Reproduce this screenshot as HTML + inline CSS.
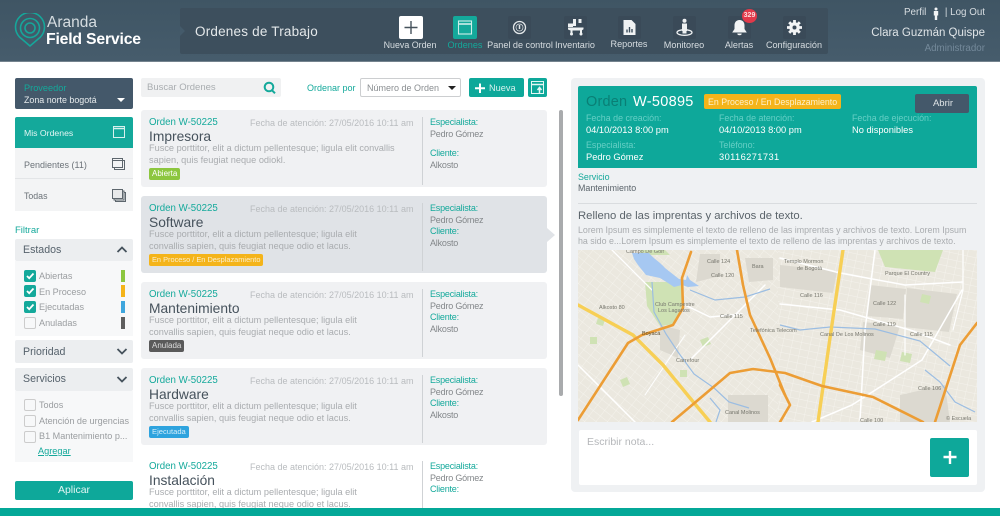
<!DOCTYPE html>
<html lang="es"><head><meta charset="utf-8"><title>Aranda Field Service</title>
<style>
html,body{margin:0;padding:0;width:1000px;height:516px;overflow:hidden;background:#fff}
body{position:relative;font-family:"Liberation Sans",sans-serif;font-size:10px;color:#777}
.a,.t{position:absolute}
.t{white-space:nowrap;line-height:12px}
.c{transform:translateX(-50%)}
.te{color:#14a99b}
.card{position:absolute;left:141px;width:406px;height:77px;background:#f0f1f3;border-radius:3px}
.card .d{position:absolute;left:281px;top:7px;height:68px;width:1px;background:#cfd2d5}
.o{position:absolute;left:8px;top:7px;font-size:9.7px;line-height:12px;color:#14a99b;white-space:nowrap}
.f{position:absolute;left:109px;top:7px;font-size:9px;line-height:12px;color:#b9bcbf;white-space:nowrap}
.h{position:absolute;left:8px;top:18px;font-size:13.8px;line-height:18px;color:#46525c;white-space:nowrap}
.p{position:absolute;left:8px;top:33px;font-size:9.2px;line-height:11.5px;color:#a9acaf;white-space:nowrap}
.s{position:absolute;left:289px;font-size:9px;line-height:12px;white-space:nowrap;letter-spacing:-.2px}
.b{position:absolute;left:8px;height:12px;line-height:12px;font-size:8px;border-radius:2px;color:#fff;padding:0 3px;white-space:nowrap}
.tile{position:absolute;top:16px;width:23px;height:23px;background:#3a4a58;border-radius:2px}
.nl{position:absolute;top:39px;font-size:9.1px;line-height:12px;color:#d7dde1;white-space:nowrap;transform:translateX(-50%)}
.cb{position:absolute;left:24px;width:10px;height:10px;border-radius:2px}
.on{background:#14a99b;border:1px solid #14a99b}
.off{background:#f7f8f9;border:1px solid #ccc}
.fl{position:absolute;left:39px;font-size:9.1px;line-height:12px;color:#9a9da0;white-space:nowrap}
.fh{position:absolute;left:15px;width:118px;background:#eceef0;border-radius:2px}
.fh span{position:absolute;left:8px;top:5px;font-size:10.6px;line-height:13px;color:#56626c}
.lab{position:absolute;font-size:8.9px;line-height:12px;white-space:nowrap}
.v{font-size:9.3px}
svg{position:absolute;overflow:hidden}
</style></head><body>

<!-- header -->
<div class="a" style="left:0;top:0;width:1000px;height:62px;background:linear-gradient(#3f5564,#465c6c);border-bottom:1px solid #74838e;box-sizing:border-box"></div>
<svg style="left:13px;top:13px" width="34" height="36" viewBox="0 0 34 36" fill="none" stroke="#16a69a"><path d="M17 33 L6.5 24 A14.5 14.5 0 1 1 27.5 24 Z" stroke-width="1.6"/><circle cx="17" cy="15" r="9.5" stroke-width="1.6"/><circle cx="17" cy="15" r="5" stroke-width="1.6"/></svg>
<div class="t" style="left:47px;top:14px;font-size:15.5px;line-height:17px;color:#d6dde1">Aranda</div>
<div class="t" style="left:46px;top:30px;font-size:15.800px;line-height:20px;font-weight:700;color:#fff;letter-spacing:-.2px">Field Service</div>
<div class="a" style="left:180px;top:8px;width:648px;height:46px;background:#3d4f5d;border-radius:2px"></div>
<div class="a" style="left:180px;top:26px;width:0;height:0;border-left:5px solid #445a6a;border-top:5px solid transparent;border-bottom:5px solid transparent"></div>
<div class="t" style="left:195px;top:23px;font-size:13.500px;line-height:17px;color:#e4e8ea;letter-spacing:.2px">Ordenes de Trabajo</div>

<div class="a" style="left:399px;top:16px;width:24px;height:23px;background:#fff;border-radius:2px"></div>
<svg style="left:399px;top:16px" width="24" height="23"><path d="M12 5v13M5.5 11.500h13" stroke="#46525c" stroke-width="1.400"/></svg>
<div class="nl" style="left:410px;font-size:8.900px">Nueva Orden</div>

<div class="a" style="left:453px;top:16px;width:24px;height:23px;background:#14a99b;border-radius:2px"></div>
<svg style="left:453px;top:16px" width="24" height="23" fill="none" stroke="#cdeeea"><rect x="5.500" y="5" width="13" height="13" stroke-width="1.100"/><path d="M5.500 8h13" stroke-width="1.600"/></svg>
<div class="nl" style="left:465px;color:#14a99b">Ordenes</div>

<div class="tile" style="left:508px"></div>
<svg style="left:508px;top:16px" width="23" height="23" fill="none" stroke="#e4e8ea"><circle cx="11.500" cy="11.500" r="6" stroke-width="1.300"/><circle cx="11.500" cy="11.500" r="3.500" stroke-width=".7"/><path d="M11.500 9v4" stroke-width="1.500"/></svg>
<div class="nl" style="left:520px">Panel de control</div>

<div class="tile" style="left:564px"></div>
<svg style="left:564px;top:16px" width="23" height="23" fill="#eef1f2"><rect x="9" y="3" width="3" height="7"/><rect x="14.500" y="3" width="3" height="4"/><rect x="4" y="7.500" width="5" height="3.500"/><path d="M4 11.500h15.500v1.800l-1.500 1v2.700h-2v-2.500H8.500v2.500h-2v-2.500L4 13.500z"/><circle cx="7.500" cy="18" r="1.500"/><circle cx="17" cy="18" r="1.500"/></svg>
<div class="nl" style="left:575px">Inventario</div>

<div class="tile" style="left:618px"></div>
<svg style="left:618px;top:16px" width="23" height="23"><path d="M5.500 4h8l4 4v11h-12z" fill="#f0f2f3"/><path d="M9 16.500v-3M11.500 16.500v-5.500M14 16.500v-3.500" stroke="#3b4c5a" stroke-width="1.400"/></svg>
<div class="nl" style="left:629px;top:38px">Reportes</div>

<div class="tile" style="left:673px"></div>
<svg style="left:673px;top:16px" width="23" height="23"><circle cx="11.500" cy="4.800" r="2" fill="#eef1f2"/><path d="M9 7.500h5v7.500H9z" fill="#eef1f2"/><ellipse cx="11.500" cy="16.500" rx="7.500" ry="2.800" fill="none" stroke="#eef1f2" stroke-width="1.300"/><path d="M9.500 14h4v3.500h-4z" fill="#eef1f2"/></svg>
<div class="nl" style="left:684px">Monitoreo</div>

<div class="tile" style="left:728px"></div>
<svg style="left:728px;top:16px" width="23" height="23"><path d="M11.500 4c3.400 0 5 2.500 5 5.500v3.500l2.300 3.500H4.200L6.500 13V9.500C6.500 6.500 8.100 4 11.500 4z" fill="#f2f4f5"/><path d="M9.300 17.500h4.400a2.200 1.800 0 0 1-4.400 0z" fill="#f2f4f5"/></svg>
<div class="a" style="left:742px;top:9px;width:15px;height:14px;border-radius:50%;background:#e2394a"></div>
<div class="t c" style="left:749.500px;top:10px;font-size:7px;font-weight:700;color:#fbdcdc">329</div>
<div class="nl" style="left:739px">Alertas</div>

<div class="tile" style="left:783px"></div>
<svg style="left:783px;top:16px" width="23" height="23"><path d="M11.500 4v15M4 11.500h15M6.200 6.200l10.600 10.600M16.800 6.200L6.200 16.800" stroke="#f2f4f5" stroke-width="2.800"/><circle cx="11.500" cy="11.500" r="5.300" fill="#f2f4f5"/><circle cx="11.500" cy="11.500" r="2" fill="#3a4a58"/></svg>
<div class="nl" style="left:794px">Configuración</div>

<div class="t" style="right:15px;top:7px;font-size:9.800px;color:#d7dde1">| Log Out</div>
<div class="t" style="left:904px;top:7px;font-size:9.800px;color:#d7dde1">Perfil</div>
<svg style="left:932px;top:7px" width="8" height="13" fill="#f2f4f5"><circle cx="4" cy="2" r="1.500"/><path d="M1.800 4h4.400v4.500H5.200V13H2.800V8.500H1.800z"/></svg>
<div class="t" style="right:15px;top:26px;font-size:11.500px;line-height:15px;color:#dfe4e7">Clara Guzmán Quispe</div>
<div class="t" style="right:15px;top:43px;font-size:9.800px;color:#74899a">Administrador</div>

<!-- sidebar -->
<div class="a" style="left:15px;top:78px;width:118px;height:31px;background:#44586a;border-radius:2px"></div>
<div class="t te" style="left:24px;top:82px;font-size:9.200px;color:#14a99b">Proveedor</div>
<div class="t" style="left:24px;top:94px;font-size:8.900px;color:#e6eaec">Zona norte bogotá</div>
<div class="a" style="left:117px;top:98px;border-top:4px solid #fff;border-left:4px solid transparent;border-right:4px solid transparent"></div>

<div class="a" style="left:15px;top:117px;width:118px;height:31px;background:#14a99b;border-radius:2px 2px 0 0"></div>
<div class="t" style="left:24px;top:127px;font-size:8.700px;color:#e2f5f3">Mis Ordenes</div>
<svg style="left:112px;top:125px" width="14" height="14" fill="none" stroke="#d8f1ee"><rect x="1.500" y="1.500" width="11" height="11"/><path d="M1.500 3.500h11" stroke-width="1.500"/></svg>
<div class="a" style="left:15px;top:148px;width:118px;height:31px;background:#f3f4f5;border-bottom:1px solid #e3e5e7;box-sizing:border-box"></div>
<div class="t" style="left:24px;top:159px;font-size:9px;color:#6c7379">Pendientes (11)</div>
<svg style="left:112px;top:157px" width="14" height="14" fill="#f3f4f5" stroke="#5d666d"><rect x="2.500" y="3.500" width="10" height="9"/><rect x="0.500" y="1.500" width="10" height="9"/><path d="M0.500 3.500h10"/></svg>
<div class="a" style="left:15px;top:179px;width:118px;height:32px;background:#f3f4f5"></div>
<div class="t" style="left:24px;top:190px;font-size:8.800px;color:#6c7379">Todas</div>
<svg style="left:112px;top:188px" width="14" height="14" fill="#e8e9ea" stroke="#5d666d"><rect x="3.500" y="4.500" width="10" height="9"/><rect x="2" y="3" width="10" height="9"/><rect x="0.500" y="1.500" width="10" height="9"/></svg>

<div class="t te" style="left:15px;top:225px;font-size:9.500px">Filtrar</div>
<div class="a" style="left:15px;top:261px;width:118px;height:75px;background:#f7f8f9"></div>
<div class="fh" style="top:239px;height:22px"><span style="top:5px">Estados</span></div>
<svg style="left:116px;top:245px" width="12" height="9" fill="none" stroke="#46525c" stroke-width="1.800"><path d="M1.500 7L6 2.500 10.500 7"/></svg>

<div class="cb on" style="top:270px"></div><div class="cb on" style="top:285px"></div><div class="cb on" style="top:301px"></div><div class="cb off" style="top:317px"></div>
<svg style="left:24px;top:270px" width="12" height="60" fill="none" stroke="#fff" stroke-width="1.800"><path d="M3 6l2.200 2.200L9.500 3.500M3 21l2.200 2.200 4.300-4.700M3 37l2.200 2.200 4.300-4.700"/></svg>
<div class="fl" style="top:270px">Abiertas</div><div class="fl" style="top:286px">En Proceso</div><div class="fl" style="top:301px">Ejecutadas</div><div class="fl" style="top:317px">Anuladas</div>
<div class="a" style="left:121px;top:270px;width:4px;height:12px;background:#8cc63f"></div>
<div class="a" style="left:121px;top:285px;width:4px;height:12px;background:#f4b41a"></div>
<div class="a" style="left:121px;top:301px;width:4px;height:12px;background:#3ea6dd"></div>
<div class="a" style="left:121px;top:317px;width:4px;height:12px;background:#5e5e5e"></div>

<div class="fh" style="top:340px;height:23px"><span style="top:6px">Prioridad</span></div>
<svg style="left:116px;top:347px" width="12" height="9" fill="none" stroke="#46525c" stroke-width="1.800"><path d="M1.500 2L6 6.500 10.500 2"/></svg>
<div class="fh" style="top:368px;height:23px"><span style="top:5px">Servicios</span></div>
<svg style="left:116px;top:375px" width="12" height="9" fill="none" stroke="#46525c" stroke-width="1.800"><path d="M1.500 2L6 6.500 10.500 2"/></svg>
<div class="a" style="left:15px;top:391px;width:118px;height:71px;background:#f7f8f9"></div>
<div class="cb off" style="top:399px"></div><div class="cb off" style="top:415px"></div><div class="cb off" style="top:431px"></div>
<div class="fl" style="top:399px">Todos</div><div class="fl" style="top:415px">Atención de urgencias</div><div class="fl" style="top:430px">B1 Mantenimiento p...</div>
<div class="t te" style="left:38px;top:445px;font-size:9.200px;text-decoration:underline">Agregar</div>
<div class="a" style="left:15px;top:481px;width:118px;height:19px;background:#0ea89a;border-radius:2px"></div>
<div class="t c" style="left:74px;top:484px;font-size:10.500px;color:#e2f5f3">Aplicar</div>

<!-- toolbar -->
<div class="a" style="left:141px;top:78px;width:140px;height:19px;background:#f0f1f2;border-radius:2px"></div>
<div class="t" style="left:147px;top:82px;font-size:9.500px;color:#a9adb0">Buscar Ordenes</div>
<svg style="left:262px;top:80px" width="15" height="15" fill="none" stroke="#14a99b" stroke-width="2"><circle cx="7" cy="7" r="4.300"/><path d="M10 10.300l3 3"/></svg>
<div class="t te" style="left:307px;top:82px;font-size:9px">Ordenar por</div>
<div class="a" style="left:360px;top:78px;width:101px;height:19px;background:#fff;border:1px solid #ccced0;border-radius:2px;box-sizing:border-box"></div>
<div class="t" style="left:367px;top:82px;font-size:9px;color:#8a8e91">Número de Orden</div>
<div class="a" style="left:448px;top:86px;border-top:4px solid #222;border-left:4px solid transparent;border-right:4px solid transparent"></div>
<div class="a" style="left:469px;top:78px;width:55px;height:19px;background:#0ea89a;border-radius:2px"></div>
<svg style="left:473px;top:81px" width="14" height="14" stroke="#fff" stroke-width="2"><path d="M7 2.500v9.500M2 7.200h10"/></svg>
<div class="t" style="left:489px;top:82px;font-size:9.200px;color:#d8f1ee">Nueva</div>
<div class="a" style="left:528px;top:78px;width:19px;height:19px;background:#0ea89a;border-radius:2px"></div>
<svg style="left:528px;top:78px" width="19" height="19" fill="none" stroke="#e5f6f4"><rect x="3.500" y="3.500" width="12" height="12"/><path d="M3.500 6.500h12" stroke-width="1.500"/><path d="M11.500 15v-5M9.500 12l2-2.500 2 2.500" stroke-width="1.500"/></svg>

<!-- cards -->
<div class="card" style="top:110px"><div class="d"></div>
<div class="o">Orden W-50225</div><div class="f">Fecha de atención: 27/05/2016 10:11 am</div><div class="h">Impresora</div>
<div class="p">Fusce porttitor, elit a dictum pellentesque; ligula elit convallis<br>sapien, quis feugiat neque odiokl.</div>
<div class="b" style="top:58px;background:#8cc63f">Abierta</div>
<div class="s te" style="top:6px">Especialista:</div><div class="s" style="top:18px;color:#83878a">Pedro Gómez</div><div class="s te" style="top:37px">Cliente:</div><div class="s" style="top:49px;color:#83878a">Alkosto</div></div>

<div class="card" style="top:196px;background:#e0e3e7"><div class="d"></div>
<div class="o">Orden W-50225</div><div class="f">Fecha de atención: 27/05/2016 10:11 am</div><div class="h">Software</div>
<div class="p">Fusce porttitor, elit a dictum pellentesque; ligula elit<br>convallis sapien, quis feugiat neque odio et lacus.</div>
<div class="b" style="top:58px;background:#f4b41a;color:#fbeecb;font-size:7.400px">En Proceso / En Desplazamiento</div>
<div class="s te" style="top:6px">Especialista:</div><div class="s" style="top:18px;color:#83878a">Pedro Gómez</div><div class="s te" style="top:29px">Cliente:</div><div class="s" style="top:41px;color:#83878a">Alkosto</div></div>
<div class="a" style="left:547px;top:228px;border-left:8px solid #e0e3e7;border-top:7px solid transparent;border-bottom:7px solid transparent"></div>

<div class="card" style="top:282px"><div class="d"></div>
<div class="o">Orden W-50225</div><div class="f">Fecha de atención: 27/05/2016 10:11 am</div><div class="h">Mantenimiento</div>
<div class="p">Fusce porttitor, elit a dictum pellentesque; ligula elit<br>convallis sapien, quis feugiat neque odio et lacus.</div>
<div class="b" style="top:58px;background:#5a5a5a;color:#ddd">Anulada</div>
<div class="s te" style="top:6px">Especialista:</div><div class="s" style="top:18px;color:#83878a">Pedro Gómez</div><div class="s te" style="top:29px">Cliente:</div><div class="s" style="top:41px;color:#83878a">Alkosto</div></div>

<div class="card" style="top:368px"><div class="d"></div>
<div class="o">Orden W-50225</div><div class="f">Fecha de atención: 27/05/2016 10:11 am</div><div class="h">Hardware</div>
<div class="p">Fusce porttitor, elit a dictum pellentesque; ligula elit<br>convallis sapien, quis feugiat neque odio et lacus.</div>
<div class="b" style="top:58px;background:#2ea3de;color:#d5eefa;font-size:7.600px">Ejecutada</div>
<div class="s te" style="top:6px">Especialista:</div><div class="s" style="top:18px;color:#83878a">Pedro Gómez</div><div class="s te" style="top:29px">Cliente:</div><div class="s" style="top:41px;color:#83878a">Alkosto</div></div>

<div class="card" style="top:454px;background:#fff;height:54px;overflow:hidden"><div class="d"></div>
<div class="o">Orden W-50225</div><div class="f">Fecha de atención: 27/05/2016 10:11 am</div><div class="h">Instalación</div>
<div class="p">Fusce porttitor, elit a dictum pellentesque; ligula elit<br>convallis sapien, quis feugiat neque odio et lacus.</div>
<div class="s te" style="top:6px">Especialista:</div><div class="s" style="top:18px;color:#83878a">Pedro Gómez</div><div class="s te" style="top:29px">Cliente:</div></div>

<div class="a" style="left:559px;top:110px;width:4px;height:286px;background:#a9abad;border-radius:2px"></div>

<!-- detail -->
<div class="a" style="left:571px;top:78px;width:414px;height:414px;background:#eff1f3;border-radius:4px"></div>
<div class="a" style="left:578px;top:86px;width:399px;height:82px;background:#0ea89a;border-radius:2px 2px 0 0"></div>
<div class="t" style="left:586px;top:93px;font-size:14.500px;line-height:18px;color:#0a7f75;letter-spacing:.2px">Orden</div>
<div class="t" style="left:633px;top:93px;font-size:14.500px;line-height:18px;color:#fff;letter-spacing:.3px">W-50895</div>
<div class="a" style="left:704px;top:94px;width:137px;height:15px;background:#f4b41a;border-radius:2px"></div>
<div class="t" style="left:708px;top:96px;font-size:8.800px;color:#fdf0cd">En Proceso / En Desplazamiento</div>
<div class="a" style="left:915px;top:94px;width:54px;height:19px;background:#44586a;border-radius:2px"></div>
<div class="t c" style="left:943px;top:98px;font-size:9.500px;color:#dfe4e7">Abrir</div>
<div class="lab" style="left:586px;top:112px;color:#66cfc5">Fecha de creación:</div><div class="lab v" style="left:586px;top:124px;color:#fff">04/10/2013 8:00 pm</div>
<div class="lab" style="left:719px;top:112px;color:#66cfc5">Fecha de atención:</div><div class="lab v" style="left:719px;top:124px;color:#fff">04/10/2013 8:00 pm</div>
<div class="lab" style="left:852px;top:112px;color:#66cfc5">Fecha de ejecución:</div><div class="lab v" style="left:852px;top:124px;color:#fff">No disponibles</div>
<div class="lab" style="left:586px;top:139px;color:#66cfc5">Especialista:</div><div class="lab v" style="left:586px;top:151px;color:#fff">Pedro Gómez</div>
<div class="lab" style="left:719px;top:139px;color:#66cfc5">Teléfono:</div><div class="lab v" style="left:719px;top:151px;color:#fff;letter-spacing:.4px">30116271731</div>
<div class="lab te" style="left:578px;top:171px">Servicio</div><div class="lab" style="left:578px;top:182px;color:#5b646b">Mantenimiento</div>
<div class="a" style="left:578px;top:203px;width:399px;height:1px;background:#d9dcdf"></div>
<div class="t" style="left:578px;top:209px;font-size:11.300px;line-height:14px;color:#5b646b">Relleno de las imprentas y archivos de texto.</div>
<div class="t" style="left:578px;top:224px;font-size:8.850px;color:#a9acaf">Lorem Ipsum es simplemente el texto de relleno de las imprentas y archivos de texto. Lorem Ipsum</div>
<div class="t" style="left:578px;top:235px;font-size:8.850px;color:#a9acaf">ha sido e...Lorem Ipsum es simplemente el texto de relleno de las imprentas y archivos de texto.</div>

<!-- map -->
<svg style="left:578px;top:250px" width="399" height="172" viewBox="578 250 399 172" font-family="Liberation Sans, sans-serif" font-size="5.500" fill="#77776e">
<defs>
<pattern id="g1" width="9" height="7" patternUnits="userSpaceOnUse" patternTransform="rotate(38)"><path d="M0 0H9M0 0V7" stroke="#f8f6f1" stroke-width=".7" fill="none"/></pattern>
<pattern id="g2" width="9" height="7" patternUnits="userSpaceOnUse" patternTransform="rotate(12)"><path d="M0 0H9M0 0V7" stroke="#f8f6f1" stroke-width=".7" fill="none"/></pattern>
</defs>
<rect x="578" y="250" width="399" height="172" fill="#ebe8df"/>
<rect x="578" y="250" width="200" height="172" fill="url(#g1)"/>
<rect x="778" y="250" width="199" height="172" fill="url(#g2)"/>
<g fill="#dcd9d0"><path d="M780 265l57 6-4 22-53-6z"/><path d="M870 285l36 4-3 30-36-3z"/><path d="M907 288l50 6-8 38-45-5z"/><path d="M863 322l37 4-10 32-30-8z"/><path d="M900 395l45-10 5 37-50 0z"/><path d="M700 254l20 0 0 22-24 6z"/><path d="M728 395l40 0 0 27-40 0z"/><path d="M745 258l28 0 0 22-24 2z"/><path d="M660 325l20 5-2 28-18-8z"/></g>
<g fill="#cfe2b4"><path d="M645 282l37 0 0 30-7 12-15 2-13-20z"/><path d="M878 250l65 0-8 22-50-5z"/><path d="M640 250l25 0 5 5-30 0z"/><path d="M590 337l7 0 0 7-7 0z"/><path d="M620 380l7-3 3 7-7 3z"/><path d="M700 340l8-3 3 7-8 3z"/><path d="M680 370l7 0 0 7-7 0z"/><path d="M876 350l11 2-2 9-11-2z"/><path d="M902 352l10 2-2 9-10-2z"/><path d="M922 294l9 2-2 8-9-2z"/><path d="M598 318l7 2-2 6-7-2z"/></g>
<g fill="none" stroke="#fff" stroke-linecap="round"><path d="M612 250l40 40" stroke-width="1.300"/><path d="M685 305l25 12 32-3" stroke-width="1.500"/><path d="M690 360l50-50 25-25" stroke-width="1.500"/><path d="M578 365l60 60" stroke-width="1.500"/><path d="M645 395l40-60" stroke-width="1"/><path d="M780 258l60 15 65 12 58-3" stroke-width="1.500"/><path d="M780 304l60 6 70 20 40 15" stroke-width="1.500"/><path d="M875 250l-10 80-5 90" stroke-width="1.500"/><path d="M905 295l0 60" stroke-width="1.200"/><path d="M962 290l-40 70-70 45-40 17" stroke-width="1.500"/><path d="M963 250l0 40-10 40" stroke-width="1.200"/></g>
<path d="M632 253h17c5 6 12 10 16 15l14 11 7 1 1-5 3 5 9 6-11 1-6-2-8 2-6-4-8-5-14-3-8-10-4-6z" fill="#a6c8f2"/>
<g fill="none" stroke="#9bbde2" stroke-width="1.200"><path d="M652 282l2 30 12 22 12 18 16 22 20 14 15 14 20 6"/><path d="M690 290l25 10 30-3 25-8"/><path d="M780 325l20 5 30-3 45 2 45 12 30 25"/><path d="M925 370l15 12 15 20 20 10"/><path d="M710 398l10 12-4 12"/></g>
<g fill="none" stroke-linejoin="round" stroke-linecap="round"><path d="M578 305l55 30 30 30 27 33 20 24" stroke="#f7cf55" stroke-width="3.400"/><path d="M843 250l-13 88-12 84" stroke="#f7cf55" stroke-width="3.400"/><path d="M578 420l50-77 14-8 31-10 10-17-1-30 9-26" stroke="#ec9d35" stroke-width="2.600"/><path d="M737 250l6 35 7 30 20 43 15 37" stroke="#ec9d35" stroke-width="2.600"/><path d="M672 422l58-49 23-4 32 4 37 13 51 11 50 25" stroke="#ec9d35" stroke-width="2.600"/><path d="M780 385l10 20-10 17" stroke="#ec9d35" stroke-width="2.600"/><path d="M977 323l-17 22-25 77" stroke="#ec9d35" stroke-width="2.600"/></g>
<text x="626" y="253">Campo De Golf</text><text x="707" y="263">Calle 124</text><text x="711" y="277">Calle 120</text><text x="752" y="268">Bara</text><text x="599" y="309">Alkosto 80</text><text x="655" y="306">Club Campestre</text><text x="658" y="312">Los Lagartos</text><text x="720" y="318">Calle 115</text><text x="750" y="332">Telefónica Telecom</text><text x="676" y="362">Carrefour</text><text x="642" y="335" fill="#5a4a2c">Boyacá</text><text x="725" y="414">Canal Molinos</text><text x="784" y="263">Templo Mormon</text><text x="797" y="270">de Bogotá</text><text x="885" y="275">Parque El Country</text><text x="800" y="297">Calle 116</text><text x="820" y="336">Canal De Los Molinos</text><text x="873" y="305">Calle 122</text><text x="873" y="326">Calle 119</text><text x="910" y="336">Calle 115</text><text x="860" y="422">Calle 100</text><text x="918" y="390">Calle 106</text><text x="946" y="420">© Escuela</text>
</svg>

<!-- note -->
<div class="a" style="left:579px;top:430px;width:398px;height:55px;background:#fff;border-radius:2px"></div>
<div class="t" style="left:587px;top:436px;font-size:10.500px;color:#b5b7ba">Escribir nota...</div>
<div class="a" style="left:930px;top:438px;width:39px;height:39px;background:#0ea89a;border-radius:2px"></div>
<svg style="left:930px;top:438px" width="39" height="39" stroke="#fff" stroke-width="2.400"><path d="M20 13v13M13.500 19h13"/></svg>

<div class="a" style="left:0;top:508px;width:1000px;height:8px;background:#04a898"></div>
</body></html>
